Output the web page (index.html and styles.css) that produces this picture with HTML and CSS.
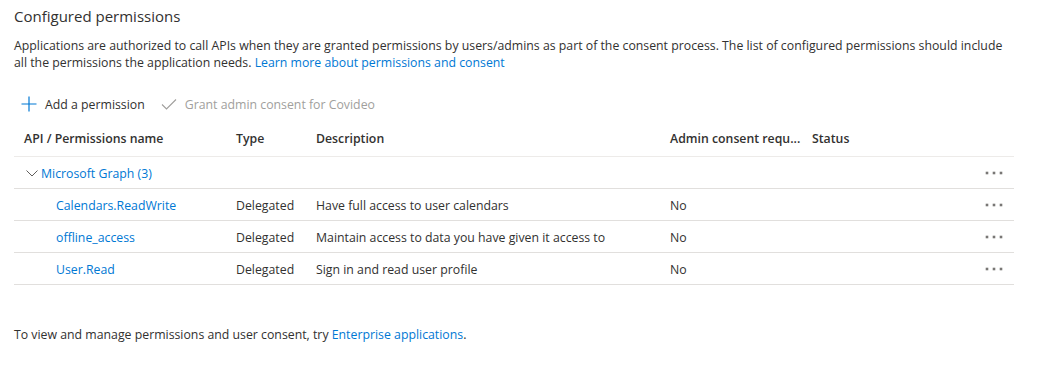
FILE: index.html
```html
<!DOCTYPE html>
<html lang="en">
<head>
<meta charset="utf-8"/>
<title>API permissions</title>
<link rel="stylesheet" href="styles.css">
</head>
<body>
<section class="panel">
  <h2 class="section-title">Configured permissions</h2>
  <p class="intro">Applications are authorized to call APIs when they are granted permissions by users/admins as part of the consent process. The list of configured permissions should include all the permissions the application needs. <a href="#">Learn more about permissions and consent</a></p>

  <div class="toolbar">
    <button class="tool-btn">
      <svg width="16" height="16" viewBox="0 0 16 16"><path d="M8 0.5v15M0.5 8h15" stroke="#0078d4" stroke-width="1.2" fill="none"/></svg>
      <span>Add a permission</span>
    </button>
    <button class="tool-btn disabled">
      <svg width="16" height="16" viewBox="0 0 16 16"><path d="M1 8.5l4.5 4.5L15 3.5" stroke="#a19f9d" stroke-width="1.1" fill="none"/></svg>
      <span>Grant admin consent for Covideo</span>
    </button>
  </div>

  <table class="perm-table">
    <thead>
      <tr>
        <th class="col-name">API / Permissions name</th>
        <th class="col-type">Type</th>
        <th class="col-desc">Description</th>
        <th class="col-admin">Admin consent requ...</th>
        <th class="col-status">Status</th>
        <th class="col-more"></th>
      </tr>
    </thead>
    <tbody>
      <tr class="group-row">
        <td colspan="5">
          <span class="group-label">
            <svg width="12" height="12" viewBox="0 0 12 12"><path d="M0.5 3.5l5.5 5.5 5.5-5.5" stroke="#605e5c" stroke-width="1" fill="none"/></svg>
            <a href="#">Microsoft Graph (3)</a>
          </span>
        </td>
        <td class="col-more"><svg class="more" width="18" height="4" viewBox="0 0 18 4"><rect x="0.7" y="0.7" width="2.6" height="2.6"/><rect x="7.7" y="0.7" width="2.6" height="2.6"/><rect x="14.7" y="0.7" width="2.6" height="2.6"/></svg></td>
      </tr>
      <tr>
        <td class="perm"><a href="#">Calendars.ReadWrite</a></td>
        <td>Delegated</td>
        <td>Have full access to user calendars</td>
        <td>No</td>
        <td></td>
        <td class="col-more"><svg class="more" width="18" height="4" viewBox="0 0 18 4"><rect x="0.7" y="0.7" width="2.6" height="2.6"/><rect x="7.7" y="0.7" width="2.6" height="2.6"/><rect x="14.7" y="0.7" width="2.6" height="2.6"/></svg></td>
      </tr>
      <tr>
        <td class="perm"><a href="#">offline_access</a></td>
        <td>Delegated</td>
        <td>Maintain access to data you have given it access to</td>
        <td>No</td>
        <td></td>
        <td class="col-more"><svg class="more" width="18" height="4" viewBox="0 0 18 4"><rect x="0.7" y="0.7" width="2.6" height="2.6"/><rect x="7.7" y="0.7" width="2.6" height="2.6"/><rect x="14.7" y="0.7" width="2.6" height="2.6"/></svg></td>
      </tr>
      <tr>
        <td class="perm"><a href="#">User.Read</a></td>
        <td>Delegated</td>
        <td>Sign in and read user profile</td>
        <td>No</td>
        <td></td>
        <td class="col-more"><svg class="more" width="18" height="4" viewBox="0 0 18 4"><rect x="0.7" y="0.7" width="2.6" height="2.6"/><rect x="7.7" y="0.7" width="2.6" height="2.6"/><rect x="14.7" y="0.7" width="2.6" height="2.6"/></svg></td>
      </tr>
    </tbody>
  </table>

  <p class="footnote">To view and manage permissions and user consent, try <a href="#">Enterprise applications</a>.</p>
</section>
</body>
</html>
```

FILE: styles.css
```css
body {
  margin: 0;
  font-family: "Segoe UI", "Open Sans", sans-serif;
  font-size: 12.3px;
  color: #323130;
  background-color: #ffffff;
}
a {
  color: #0078d4;
  text-decoration: none;
}
.panel {
  padding: 4px 14px;
  width: 1000px;
}
.section-title {
  font-size: 15px;
  font-weight: 400;
  margin: 0 0 9px;
  line-height: 24px;
}
.intro {
  margin: 0;
  line-height: 17px;
}
.toolbar {
  display: flex;
  align-items: center;
  gap: 16px;
  margin-top: 19px;
  padding-left: 7px;
}
.tool-btn {
  display: flex;
  align-items: center;
  gap: 8px;
  background: none;
  border: none;
  padding: 0;
  font: inherit;
  color: #323130;
  height: 28px;
}
.tool-btn.disabled {
  color: #a19f9d;
}
.perm-table {
  width: 1000px;
  border-collapse: collapse;
  margin-top: 2px;
  table-layout: fixed;
}
.perm-table th {
  text-align: left;
  font-weight: 600;
  height: 35px;
  padding: 1px 10px 0;
  border-bottom: 1px solid #edebe9;
  white-space: nowrap;
}
.perm-table td {
  height: 30px;
  padding: 1px 10px 0;
  border-bottom: 1px solid #e1dfdd;
  white-space: nowrap;
}
.col-name { width: 192px; }
.col-type { width: 60px; }
.col-desc { width: 334px; }
.col-admin { width: 122px; }
.col-more { width: 20px; text-align: center; }
.group-label {
  display: flex;
  align-items: center;
  gap: 3px;
  padding-left: 2px;
}
.perm {
  padding-left: 42px !important;
}
.more {
  display: block;
  margin: 0 auto;
  fill: #797775;
}
.footnote {
  margin: 41px 0 0;
  line-height: 17px;
}
```
